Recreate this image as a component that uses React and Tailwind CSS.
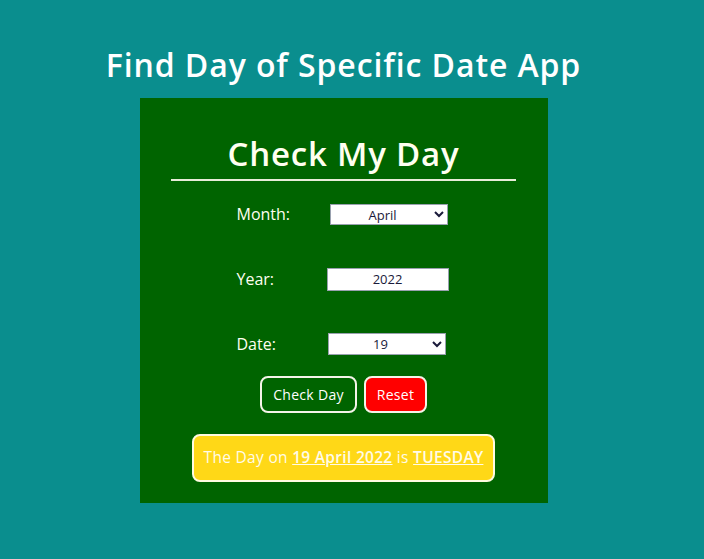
import { useState } from "react";

const MONTHS = [
  "January", "February", "March", "April", "May", "June",
  "July", "August", "September", "October", "November", "December",
];

export default function App() {
  const [month, setMonth] = useState("April");
  const [year, setYear] = useState("2022");
  const [date, setDate] = useState("19");

  return (
    <div
      className="min-h-[559px] w-full bg-[#0a8e8e] overflow-hidden"
      style={{ fontFamily: '"Open Sans", "Liberation Sans", sans-serif' }}
    >
      <div className="w-[687px] flex flex-col items-center pt-[45px]">
        <h1 className="text-[32px] leading-[40px] font-semibold text-white tracking-[0.9px]">
          Find Day of Specific Date App
        </h1>

        <div className="mt-[13px] w-[408px] bg-[#006400] flex flex-col items-center pt-[36px] pb-[21px]">
          <h2 className="text-[33px] leading-[40px] font-semibold text-[#fffff0] tracking-[0.8px]">
            Check My Day
          </h2>
          <div className="mt-[5px] w-[345px] h-[2px] bg-[#e8ecd8]" />

          {/* form rows */}
          <div className="mt-[22px] w-[214px] flex flex-col gap-[43px] text-[16px] text-[#fffff0]">
            <div className="flex items-center h-[22px]">
              <label className="flex-1">Month:</label>
              <div className="w-[124px] flex justify-center">
                <select
                  value={month}
                  onChange={(e) => setMonth(e.target.value)}
                  className="w-[118px] h-[21px] bg-white text-[#1a1a3a] text-[13px] text-center border border-gray-400"
                >
                  {MONTHS.map((m) => <option key={m}>{m}</option>)}
                </select>
              </div>
            </div>
            <div className="flex items-center h-[22px]">
              <label className="flex-1">Year:</label>
              <div className="w-[124px] flex justify-start">
                <input
                  value={year}
                  onChange={(e) => setYear(e.target.value)}
                  className="w-[122px] h-[23px] bg-white text-[#1a1a3a] text-[13px] text-center border border-gray-400 outline-none"
                />
              </div>
            </div>
            <div className="flex items-center h-[22px]">
              <label className="flex-1">Date:</label>
              <div className="w-[124px] flex justify-start pl-[1px]">
                <select
                  value={date}
                  onChange={(e) => setDate(e.target.value)}
                  className="w-[118px] h-[22px] bg-white text-[#1a1a3a] text-[13px] text-center border border-gray-400"
                >
                  {Array.from({ length: 31 }, (_, i) => <option key={i}>{i + 1}</option>)}
                </select>
              </div>
            </div>
          </div>

          {/* buttons */}
          <div className="mt-[21px] flex gap-[7px] text-[14px] tracking-[0.3px]">
            <button className="w-[97px] h-[37px] border-2 border-[#f4f4e8] rounded-[8px] text-white bg-[#006400]">
              Check Day
            </button>
            <button className="w-[63px] h-[37px] border-2 border-[#f4f4e8] rounded-[8px] text-white bg-[#ff0000]">
              Reset
            </button>
          </div>

          {/* result */}
          <div className="mt-[21px] w-[303px] h-[48px] rounded-[8px] border-2 border-[#fffbe0] bg-[#ffd817] flex items-center justify-center text-[15.5px] tracking-[0.3px] text-[#fffbe8]">
            <span>
              The Day on <b className="underline font-semibold">19 April 2022</b> is{" "}
              <b className="underline font-semibold">TUESDAY</b>
            </span>
          </div>
        </div>
      </div>
    </div>
  );
}
